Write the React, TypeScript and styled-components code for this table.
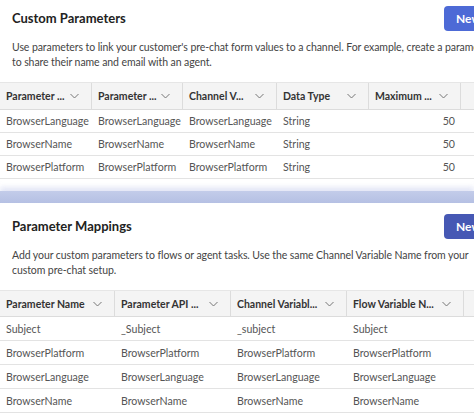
import React from "react";
import styled, { createGlobalStyle } from "styled-components";

const GlobalStyle = createGlobalStyle`
  html, body { margin: 0; padding: 0; background: #ffffff; }
  body { font-family: Lato, "Noto Sans", sans-serif; color: #333; }
`;

const Page = styled.div`
  width: 474px;
  height: 416px;
  overflow: hidden;
  background: #fff;
  display: flex;
  flex-direction: column;
`;

const Section = styled.section<{ $top: number }>`
  display: flex;
  flex-direction: column;
  padding-top: ${(p) => p.$top}px;
`;

const TitleBar = styled.div`
  height: 36px;
  display: flex;
  align-items: center;
  justify-content: space-between;
  padding-left: 12px;
`;

const Title = styled.h2`
  margin: 0;
  font-size: 13px;
  font-weight: 700;
  color: #222;
`;

const NewButton = styled.button<{ $dark?: boolean }>`
  height: 25px;
  width: 60px;
  margin-right: -30px;
  border: none;
  border-radius: 4px;
  background: ${(p) => (p.$dark ? "#4658b4" : "#4d6ad6")};
  color: #fff;
  font-family: inherit;
  font-size: 12px;
  font-weight: 700;
  text-align: left;
  padding: 0 0 0 12px;
`;

const Description = styled.div`
  padding: 4px 12px 0 12px;
  font-size: 10.5px;
  letter-spacing: -0.08px;
  line-height: 15px;
  color: #444;
`;

const Line = styled.div`
  white-space: nowrap;
`;

const Table = styled.div<{ $top: number }>`
  margin-top: ${(p) => p.$top}px;
  display: flex;
  flex-direction: column;
`;

const HeaderRow = styled.div<{ $h: number }>`
  display: flex;
  box-sizing: border-box;
  height: ${(p) => p.$h}px;
  background: #f4f4f4;
  border-top: 1px solid #e6e6e6;
  border-bottom: 1px solid #dcdcdc;
`;

const HeaderCell = styled.div<{ $w: number }>`
  width: ${(p) => p.$w}px;
  flex: none;
  box-sizing: border-box;
  display: flex;
  align-items: center;
  justify-content: space-between;
  gap: 4px;
  padding: 0 12px 0 6px;
  border-right: 1px solid #dcdcdc;
  font-size: 10.5px;
  font-weight: 700;
  color: #333;
  white-space: nowrap;
`;

const HeaderLabel = styled.span`
  flex: none;
`;

const Row = styled.div<{ $h: number }>`
  display: flex;
  box-sizing: border-box;
  height: ${(p) => p.$h}px;
  border-bottom: 1px solid #e3e3e3;
  align-items: center;
`;

const Cell = styled.div<{ $w: number; $right?: boolean }>`
  width: ${(p) => p.$w}px;
  flex: none;
  box-sizing: border-box;
  padding: 0 6px;
  font-size: 10.6px;
  color: #555;
  white-space: nowrap;
  overflow: hidden;
  text-align: ${(p) => (p.$right ? "right" : "left")};
`;

const Divider = styled.div`
  margin-top: 12px;
  height: 12px;
  background: linear-gradient(#c3cce9, #b5c0e3);
  box-shadow: 0 -4px 5px rgba(205, 212, 238, 0.55);
`;

const ChevronSvg = styled.svg`
  flex: none;
`;

const Chevron = () => (
  <ChevronSvg width="9" height="6" viewBox="0 0 9 6" aria-hidden="true">
    <path d="M0.5 1 L4.5 5 L8.5 1" fill="none" stroke="#777" strokeWidth="1" />
  </ChevronSvg>
);

type Col = { label: string; w: number; right?: boolean };

const cols1: Col[] = [
  { label: "Parameter ...", w: 92 },
  { label: "Parameter ...", w: 91 },
  { label: "Channel V...", w: 94 },
  { label: "Data Type", w: 92 },
  { label: "Maximum ...", w: 92, right: true },
];
const rows1 = [
  ["BrowserLanguage", "BrowserLanguage", "BrowserLanguage", "String", "50"],
  ["BrowserName", "BrowserName", "BrowserName", "String", "50"],
  ["BrowserPlatform", "BrowserPlatform", "BrowserPlatform", "String", "50"],
];

const cols2: Col[] = [
  { label: "Parameter Name", w: 115 },
  { label: "Parameter API ...", w: 116 },
  { label: "Channel Variabl...", w: 116 },
  { label: "Flow Variable N...", w: 117 },
];
const rows2 = [
  ["Subject", "_Subject", "_subject", "Subject"],
  ["BrowserPlatform", "BrowserPlatform", "BrowserPlatform", "BrowserPlatform"],
  ["BrowserLanguage", "BrowserLanguage", "BrowserLanguage", "BrowserLanguage"],
  ["BrowserName", "BrowserName", "BrowserName", "BrowserName"],
];

const DataTable = ({
  cols,
  rows,
  top,
  headH,
  rowH,
}: {
  cols: Col[];
  rows: string[][];
  top: number;
  headH: number;
  rowH: number;
}) => (
  <Table $top={top}>
    <HeaderRow $h={headH}>
      {cols.map((c, i) => (
        <HeaderCell key={i} $w={c.w}>
          <HeaderLabel>{c.label}</HeaderLabel>
          <Chevron />
        </HeaderCell>
      ))}
    </HeaderRow>
    {rows.map((r, i) => (
      <Row key={i} $h={rowH}>
        {r.map((v, j) => (
          <Cell key={j} $w={cols[j].w} $right={cols[j].right}>
            {v}
          </Cell>
        ))}
      </Row>
    ))}
  </Table>
);

export default function App() {
  return (
    <>
      <GlobalStyle />
      <Page>
        <Section $top={0}>
          <TitleBar>
            <Title>Custom Parameters</Title>
            <NewButton>New</NewButton>
          </TitleBar>
          <Description>
            <Line>Use parameters to link your customer's pre-chat form values to a channel. For example, create a parameter</Line>
            <Line>to share their name and email with an agent.</Line>
          </Description>
          <DataTable cols={cols1} rows={rows1} top={12} headH={28} rowH={23} />
        </Section>
        <Divider />
        <Section $top={5}>
          <TitleBar>
            <Title>Parameter Mappings</Title>
            <NewButton $dark>New</NewButton>
          </TitleBar>
          <Description>
            <Line>Add your custom parameters to flows or agent tasks. Use the same Channel Variable Name from your</Line>
            <Line>custom pre-chat setup.</Line>
          </Description>
          <DataTable cols={cols2} rows={rows2} top={12} headH={27} rowH={24} />
        </Section>
      </Page>
    </>
  );
}
